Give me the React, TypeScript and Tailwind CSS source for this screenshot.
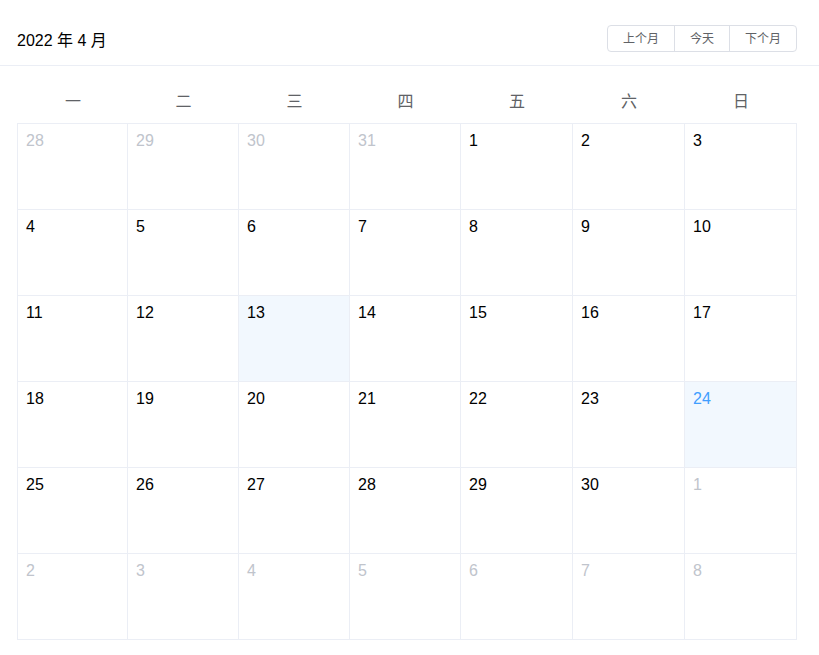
const weekdays = ["一", "二", "三", "四", "五", "六", "日"];

type Day = { label: number; muted?: boolean; today?: boolean; selected?: boolean };

const days: Day[] = [
  ...[28, 29, 30, 31].map((d) => ({ label: d, muted: true })),
  ...Array.from({ length: 30 }, (_, i) => ({
    label: i + 1,
    today: i + 1 === 24,
    selected: i + 1 === 13,
  })),
  ...[1, 2, 3, 4, 5, 6, 7, 8].map((d) => ({ label: d, muted: true })),
];

const cols = "grid-cols-[110px_111px_111px_111px_112px_112px_112px]";

export default function App() {
  return (
    <div className="min-h-screen bg-white font-['Liberation_Sans','Noto_Sans_CJK_SC',sans-serif]">
      <div className="flex h-[66px] items-start justify-between border-b border-[#ebeef5] pl-[17px] pr-[22px] pt-[25px]">
        <div className="pt-[2px] text-[16px] leading-[27px] text-black">2022 年 4 月</div>
        <div className="flex h-[27px] text-[12px] text-[#606266]">
          <button className="rounded-l-[4px] border border-[#dcdfe6] px-[15px]">上个月</button>
          <button className="-ml-px border border-[#dcdfe6] px-[15px]">今天</button>
          <button className="-ml-px rounded-r-[4px] border border-[#dcdfe6] px-[15px]">下个月</button>
        </div>
      </div>

      <div className="pl-[17px] pr-[22px] pt-[12px] pb-[16px]">
        <div className={`grid ${cols} pl-px pt-[13px] pb-[11px] text-[16px] leading-[21px] text-[#606266]`}>
          {weekdays.map((w) => (
            <div key={w} className="text-center">
              {w}
            </div>
          ))}
        </div>
        <div className={`grid ${cols} border-l border-t border-[#ebeef5]`}>
          {days.map((d, i) => (
            <div
              key={i}
              className={
                "h-[86px] border-b border-r border-[#ebeef5] p-[8px] text-[16px] leading-[18px] " +
                (d.today || d.selected ? "bg-[#f2f8fe] " : "bg-white ") +
                (d.muted ? "text-[#c0c4cc]" : d.today ? "text-[#409eff]" : "text-black")
              }
            >
              {d.label}
            </div>
          ))}
        </div>
      </div>
    </div>
  );
}
